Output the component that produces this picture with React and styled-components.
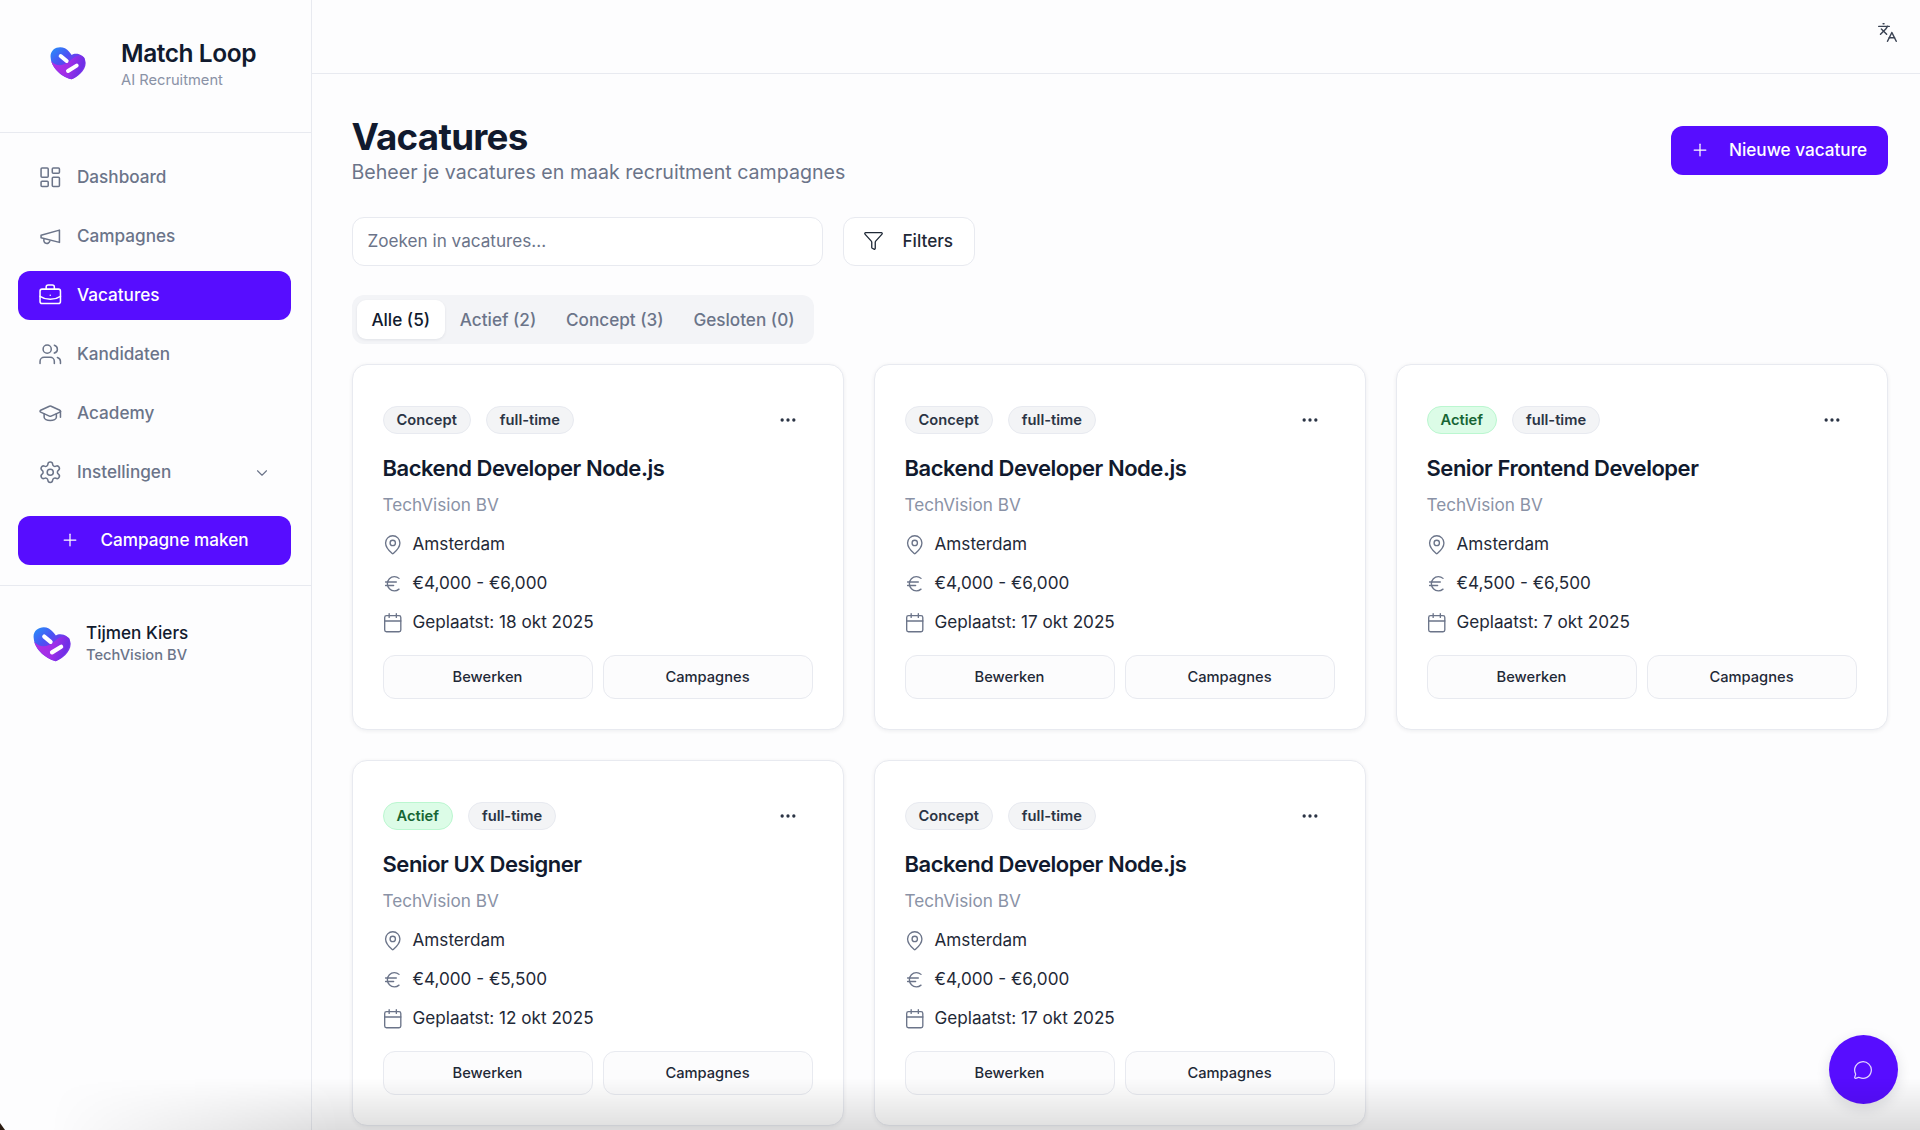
import styled, { createGlobalStyle } from 'styled-components';
import {
  LayoutDashboard, BriefcaseBusiness, Users, GraduationCap, Settings, ChevronDown,
  Plus, Funnel, MapPin, Euro, Calendar, Ellipsis, Languages, MessageCircle,
} from 'lucide-react';

const colors = {
  primary: '#570dff',
  ink: '#111a2e',
  text: '#1f2937',
  muted: '#6b7489',
  light: '#8a92a6',
  line: '#e8eaf0',
  bg: '#fdfdfe',
};

const GlobalStyle = createGlobalStyle`
  html, body { margin: 0; padding: 0; height: 100%; background: ${colors.bg}; }
  body { font-family: Inter, "Liberation Sans", sans-serif; color: ${colors.text}; }
  #root { height: 100%; }
  * { box-sizing: border-box; }
`;

const Shell = styled.div`
  display: grid;
  grid-template-columns: 312px 1fr;
  height: 1130px;
  overflow: hidden;
  position: relative;
  background: ${colors.bg};
`;

const Sidebar = styled.aside`
  border-right: 1.5px solid ${colors.line};
  display: flex;
  flex-direction: column;
`;

const Brand = styled.div`
  height: 133px;
  border-bottom: 1.5px solid ${colors.line};
  display: flex;
  align-items: center;
  padding: 0 0 6px 50px;
  gap: 35px;
`;

const BrandText = styled.div`
  display: flex;
  flex-direction: column;
  gap: 2px;
  margin-top: 2px;
`;

const BrandName = styled.div`
  font-size: 24.5px;
  font-weight: 600;
  letter-spacing: -0.45px;
  line-height: 30px;
  color: ${colors.ink};
`;

const BrandSub = styled.div`
  font-size: 14.7px;
  line-height: 20px;
  color: ${colors.light};
`;

const Nav = styled.nav`
  display: flex;
  flex-direction: column;
  gap: 10px;
  padding: 20px 20px 0 18px;
`;

const NavItem = styled.div`
  height: 49px;
  padding: 0 20px 0 19.5px;
  border-radius: 12px;
  display: flex;
  align-items: center;
  gap: 15px;
  font-size: 17.15px;
  font-weight: 500;
  color: ${(p) => (p.$active ? '#fff' : colors.muted)};
  background: ${(p) => (p.$active ? colors.primary : 'transparent')};
`;

const NavLabel = styled.span`
  flex: 1;
  margin-top: -2px;
`;

const MakeButton = styled.div`
  height: 49px;
  margin: 19px 20px 0 18px;
  border-radius: 12px;
  background: ${colors.primary};
  color: #fff;
  font-size: 17.15px;
  font-weight: 500;
  display: flex;
  align-items: center;
  justify-content: center;
  gap: 20px;
  padding-bottom: 2px;
`;

const UserBlock = styled.div`
  margin-top: 20px;
  border-top: 1.5px solid ${colors.line};
  display: flex;
  align-items: center;
  gap: 15px;
  padding: 36px 0 0 33px;
`;

const UserName = styled.div`
  font-size: 17.15px;
  font-weight: 500;
  line-height: 22px;
  color: ${colors.ink};
`;

const UserSub = styled.div`
  font-size: 14.7px;
  font-weight: 500;
  line-height: 22px;
  color: ${colors.muted};
`;

const Main = styled.main`
  display: flex;
  flex-direction: column;
  min-width: 0;
`;

const TopBar = styled.header`
  height: 74px;
  flex: none;
  border-bottom: 1.5px solid ${colors.line};
  display: flex;
  justify-content: flex-end;
  padding: 22px 22px 0 0;
  color: #3c4454;
`;

const Content = styled.div`
  padding: 41px 32px 0 39.5px;
  display: flex;
  flex-direction: column;
`;

const PageHead = styled.div`
  display: flex;
  justify-content: space-between;
  align-items: flex-start;
`;

const Title = styled.h1`
  margin: 0;
  font-size: 36.75px;
  font-weight: 700;
  line-height: 44px;
  letter-spacing: -0.75px;
  color: ${colors.ink};
`;

const Subtitle = styled.p`
  margin: 0;
  font-size: 19.6px;
  line-height: 26px;
  color: ${colors.muted};
`;

const NewButton = styled.div`
  margin-top: 11px;
  width: 217px;
  height: 49px;
  padding: 0 0 2px 19px;
  border-radius: 12px;
  background: ${colors.primary};
  color: #fff;
  font-size: 17.15px;
  font-weight: 500;
  display: flex;
  align-items: center;
  gap: 19px;
`;

const SearchRow = styled.div`
  display: flex;
  gap: 20px;
  margin-top: 32px;
`;

const SearchBox = styled.div`
  width: 471px;
  height: 49px;
  padding: 0 0 2px 15px;
  border: 1.5px solid ${colors.line};
  border-radius: 12px;
  background: #fff;
  display: flex;
  align-items: center;
  font-size: 17.15px;
  color: ${colors.muted};
`;

const FilterButton = styled.div`
  width: 132px;
  height: 49px;
  padding: 0 0 2px 19px;
  border: 1.5px solid ${colors.line};
  border-radius: 12px;
  background: #fff;
  display: flex;
  align-items: center;
  gap: 19px;
  font-size: 17.15px;
  font-weight: 500;
  color: ${colors.text};
`;

const Tabs = styled.div`
  align-self: flex-start;
  display: flex;
  align-items: center;
  height: 49px;
  margin-top: 29px;
  padding: 0 5px;
  border-radius: 12px;
  background: #f3f4f7;
`;

const Tab = styled.div`
  height: 39px;
  padding: 0 14.9px;
  border-radius: 9px;
  display: flex;
  align-items: center;
  font-size: 17.15px;
  font-weight: 500;
  color: ${(p) => (p.$active ? colors.ink : colors.muted)};
  background: ${(p) => (p.$active ? '#fff' : 'transparent')};
  box-shadow: ${(p) => (p.$active ? '0 1px 3px rgba(17,26,46,.08)' : 'none')};
`;

const Grid = styled.div`
  display: grid;
  grid-template-columns: repeat(3, 492px);
  gap: 30px;
  margin-top: 20px;
`;

const Card = styled.article`
  height: 366px;
  padding: 30px;
  background: #fff;
  border: 1.5px solid ${colors.line};
  border-radius: 15px;
  box-shadow: 0 1px 4px rgba(17, 26, 46, 0.07);
  display: flex;
  flex-direction: column;
`;

const CardTop = styled.div`
  height: 49px;
  display: flex;
  align-items: center;
  gap: 15px;
`;

const Badge = styled.span`
  height: 28px;
  padding: 0 13px;
  border-radius: 14px;
  display: inline-flex;
  align-items: center;
  font-size: 14.7px;
  font-weight: 600;
  border: 1.5px solid ${(p) => (p.$green ? '#bbf7d0' : '#e8eaf0')};
  background: ${(p) => (p.$green ? '#dcfce7' : '#f3f4f6')};
  color: ${(p) => (p.$green ? '#166534' : '#2b3445')};
`;

const MoreButton = styled.div`
  margin-left: auto;
  width: 49px;
  height: 49px;
  display: flex;
  align-items: center;
  justify-content: center;
  color: #2b3445;
`;

const JobTitle = styled.h3`
  margin: 9px 0 0;
  font-size: 22px;
  font-weight: 600;
  line-height: 30px;
  letter-spacing: -0.47px;
  color: ${colors.ink};
`;

const Company = styled.div`
  margin-top: 9.5px;
  font-size: 17.15px;
  line-height: 24px;
  color: ${colors.light};
`;

const Details = styled.div`
  margin-top: 13px;
  display: flex;
  flex-direction: column;
  gap: 11px;
`;

const Detail = styled.div`
  height: 28px;
  display: flex;
  align-items: center;
  gap: 9.5px;
  font-size: 17.15px;
  color: ${colors.text};
  svg {
    color: ${colors.muted};
    flex: none;
    margin: 2px 0 0 -1px;
  }
`;

const CardActions = styled.div`
  margin-top: 19px;
  display: grid;
  grid-template-columns: 1fr 1fr;
  gap: 10px;
`;

const GhostButton = styled.div`
  height: 44px;
  border: 1.5px solid ${colors.line};
  border-radius: 12px;
  background: #fcfcfd;
  display: flex;
  align-items: center;
  justify-content: center;
  font-size: 14.7px;
  font-weight: 500;
  color: ${colors.text};
`;

const ChatButton = styled.div`
  position: absolute;
  left: 1829px;
  top: 1035px;
  width: 69px;
  height: 69px;
  padding-right: 1px;
  border-radius: 50%;
  background: ${colors.primary};
  color: #e3d6ff;
  display: flex;
  align-items: center;
  justify-content: center;
  box-shadow: 0 4px 14px rgba(17, 26, 46, 0.12);
`;

// soft shade along the bottom edge of the page
const BottomShade = styled.div`
  position: absolute;
  left: 0;
  right: 0;
  bottom: 0;
  height: 52px;
  pointer-events: none;
  background: linear-gradient(to bottom, rgba(0, 0, 0, 0), rgba(0, 0, 0, 0.13));
  mask-image: linear-gradient(to right, transparent 50px, black 340px);
`;

// tiny dark sliver in the bottom left corner of the capture
const CornerSliver = styled.div`
  position: absolute;
  left: 0;
  bottom: 0;
  width: 5px;
  height: 7px;
  background: #2b1c12;
  clip-path: polygon(0 0, 100% 100%, 0 100%);
`;

const MegaphoneIcon = () => (
  <svg width="24.5" height="24.5" viewBox="0 0 24 24" fill="none" stroke="currentColor" strokeWidth="1.5" strokeLinecap="round" strokeLinejoin="round">
    <path d="m3 11 18-5v12L3 13.5v-2.5z" />
    <path d="M11.6 16.8a3 3 0 1 1-5.8-1.6" />
  </svg>
);

const Logo = ({ size = 36, id = 'lg' }) => (
  <svg width={size} height={size * 0.926} viewBox="60 45 108 100">
    <defs>
      <linearGradient id={`${id}a`} x1="66" y1="54" x2="118" y2="112" gradientUnits="userSpaceOnUse">
        <stop offset="0" stopColor="#2a8af8" />
        <stop offset="0.55" stopColor="#4b52f4" />
        <stop offset="1" stopColor="#7a35ea" />
      </linearGradient>
      <linearGradient id={`${id}b`} x1="70" y1="100" x2="150" y2="125" gradientUnits="userSpaceOnUse">
        <stop offset="0" stopColor="#b02fe2" />
        <stop offset="0.55" stopColor="#a02ee8" />
        <stop offset="1" stopColor="#6f2fe6" />
      </linearGradient>
    </defs>
    <path
      d="M62 80 C58 55 85 42 105 52 C115 58 120 66 125 72 C135 64 165 68 167 95 C168 120 140 140 125 145 C100 140 65 115 62 80 Z"
      fill={`url(#${id}a)`}
    />
    <path d="M63 90 C82 110 104 104 122 88 C134 76 150 68 163 80 C171 103 150 132 125 145 C100 138 72 118 63 90 Z" fill={`url(#${id}b)`} />
    <path d="M92 75 L110 90" stroke="#fff" strokeWidth="12" strokeLinecap="round" />
    <path d="M114 120 L140 104" stroke="#fff" strokeWidth="12" strokeLinecap="round" />
  </svg>
);

const navItems = [
  { label: 'Dashboard', icon: LayoutDashboard },
  { label: 'Campagnes', icon: MegaphoneIcon },
  { label: 'Vacatures', icon: BriefcaseBusiness, active: true },
  { label: 'Kandidaten', icon: Users },
  { label: 'Academy', icon: GraduationCap },
  { label: 'Instellingen', icon: Settings, chevron: true },
];

const tabs = ['Alle (5)', 'Actief (2)', 'Concept (3)', 'Gesloten (0)'];

const jobs = [
  { status: 'Concept', title: 'Backend Developer Node.js', salary: '€4,000 - €6,000', date: '18 okt 2025' },
  { status: 'Concept', title: 'Backend Developer Node.js', salary: '€4,000 - €6,000', date: '17 okt 2025' },
  { status: 'Actief', title: 'Senior Frontend Developer', salary: '€4,500 - €6,500', date: '7 okt 2025' },
  { status: 'Actief', title: 'Senior UX Designer', salary: '€4,000 - €5,500', date: '12 okt 2025' },
  { status: 'Concept', title: 'Backend Developer Node.js', salary: '€4,000 - €6,000', date: '17 okt 2025' },
];

const JobCard = ({ job }) => (
  <Card>
    <CardTop>
      <Badge $green={job.status === 'Actief'}>{job.status}</Badge>
      <Badge>full-time</Badge>
      <MoreButton><Ellipsis size={20} /></MoreButton>
    </CardTop>
    <JobTitle>{job.title}</JobTitle>
    <Company>TechVision BV</Company>
    <Details>
      <Detail><MapPin size={21.5} strokeWidth={1.5} />Amsterdam</Detail>
      <Detail><Euro size={21.5} strokeWidth={1.5} />{job.salary}</Detail>
      <Detail><Calendar size={21.5} strokeWidth={1.5} />Geplaatst: {job.date}</Detail>
    </Details>
    <CardActions>
      <GhostButton>Bewerken</GhostButton>
      <GhostButton>Campagnes</GhostButton>
    </CardActions>
  </Card>
);

export default function App() {
  return (
    <>
      <GlobalStyle />
      <Shell>
        <Sidebar>
          <Brand>
            <Logo id="brand" />
            <BrandText>
              <BrandName>Match Loop</BrandName>
              <BrandSub>AI Recruitment</BrandSub>
            </BrandText>
          </Brand>
          <Nav>
            {navItems.map(({ label, icon: Icon, active, chevron }) => (
              <NavItem key={label} $active={active}>
                <Icon size={24.5} strokeWidth={1.5} />
                <NavLabel>{label}</NavLabel>
                {chevron && <ChevronDown size={18} strokeWidth={1.5} />}
              </NavItem>
            ))}
          </Nav>
          <MakeButton><Plus size={20} strokeWidth={1.5} />Campagne maken</MakeButton>
          <UserBlock>
            <Logo size={38} id="user" />
            <div>
              <UserName>Tijmen Kiers</UserName>
              <UserSub>TechVision BV</UserSub>
            </div>
          </UserBlock>
        </Sidebar>
        <Main>
          <TopBar><Languages size={21} strokeWidth={1.7} /></TopBar>
          <Content>
            <PageHead>
              <div>
                <Title>Vacatures</Title>
                <Subtitle>Beheer je vacatures en maak recruitment campagnes</Subtitle>
              </div>
              <NewButton><Plus size={20} strokeWidth={1.5} />Nieuwe vacature</NewButton>
            </PageHead>
            <SearchRow>
              <SearchBox>Zoeken in vacatures...</SearchBox>
              <FilterButton><Funnel size={21} strokeWidth={1.5} />Filters</FilterButton>
            </SearchRow>
            <Tabs>
              {tabs.map((t, i) => <Tab key={t} $active={i === 0}>{t}</Tab>)}
            </Tabs>
            <Grid>
              {jobs.map((job, i) => <JobCard key={i} job={job} />)}
            </Grid>
          </Content>
        </Main>
        <ChatButton><MessageCircle size={20} strokeWidth={1.5} /></ChatButton>
        <BottomShade />
        <CornerSliver />
      </Shell>
    </>
  );
}
